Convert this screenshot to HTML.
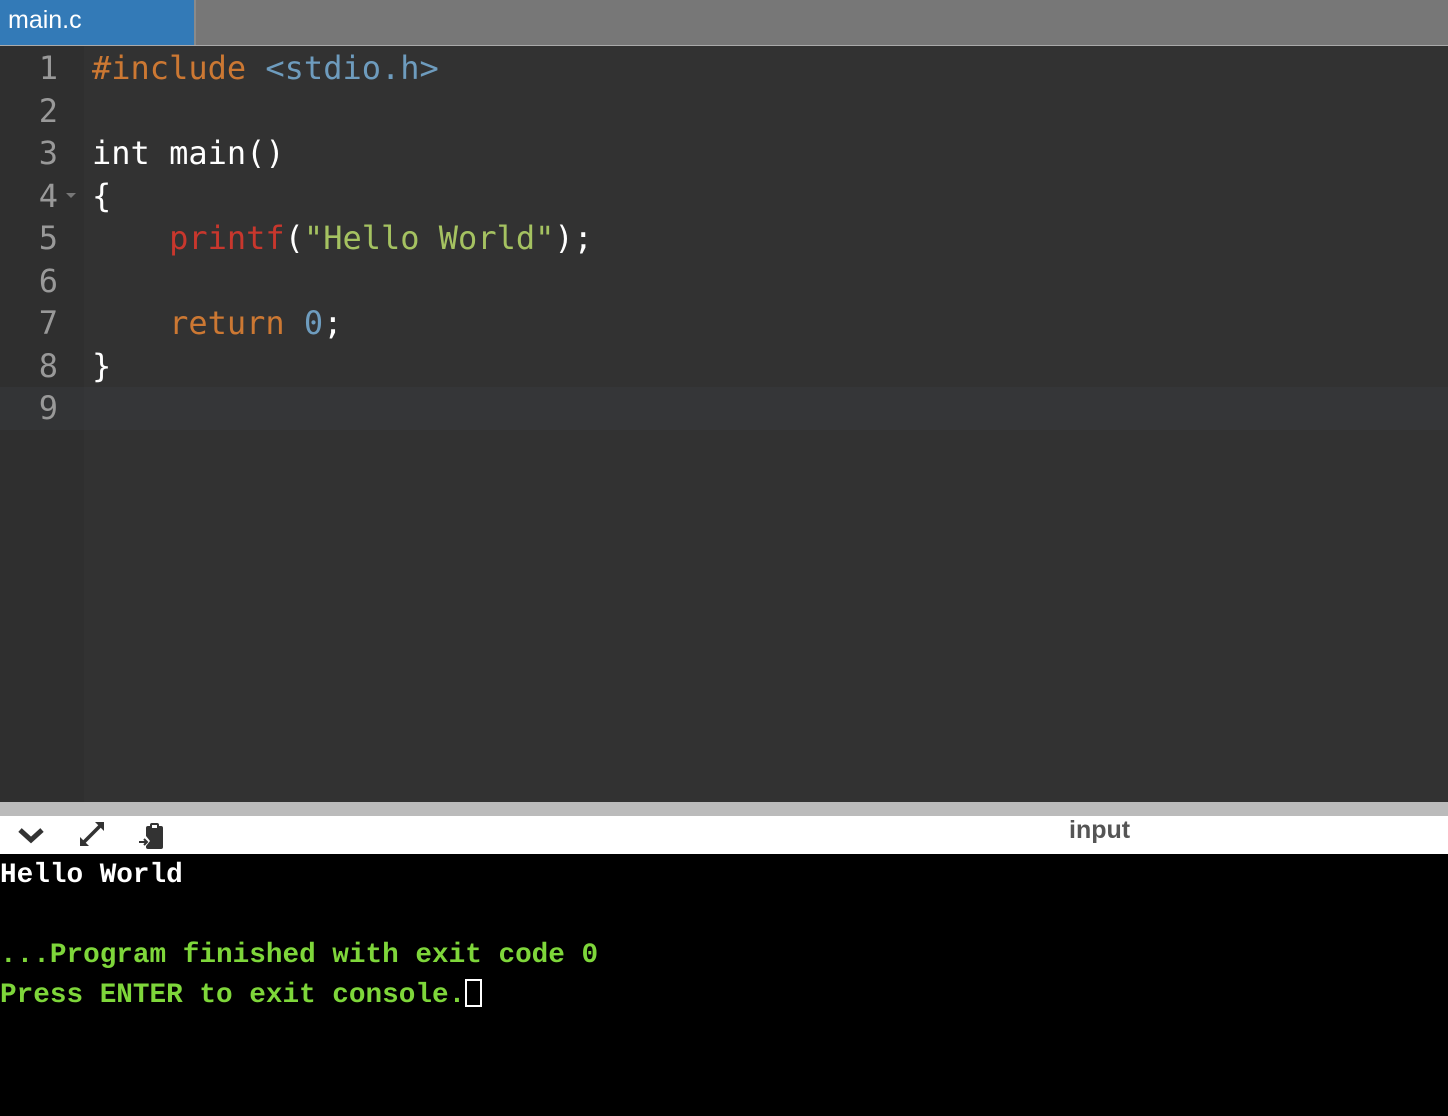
<!DOCTYPE html>
<html><head><meta charset="utf-8"><style>
*{margin:0;padding:0;box-sizing:border-box}
body{width:1448px;height:1116px;overflow:hidden;background:#000;position:relative;font-family:"Liberation Sans",sans-serif}
#tabs{position:absolute;left:0;top:0;width:1448px;height:45px;background:#777}
#tab{position:absolute;left:0;top:0;width:196px;height:45px;background:#337ab7;color:#fff;font-size:25px;padding:6px 0 0 8px;border-right:2px solid #8a8a8a}
#sep{position:absolute;left:0;top:45px;width:1448px;height:1px;background:#aaa}
#ed{position:absolute;left:0;top:46px;width:1448px;height:756px;background:#323232}
#gut{position:absolute;left:0;top:0;width:84px;height:756px;background:#2f2f2f}
#act{position:absolute;left:0;top:341px;width:1448px;height:43px;background:#353638}
#actg{position:absolute;left:0;top:341px;width:84px;height:43px;background:#333436}
.ln{position:absolute;left:0;width:58px;text-align:right;color:#999;font:32px/42.5px "DejaVu Sans Mono",monospace;margin-top:1px}
.cd{position:absolute;left:92px;color:#fff;font:32px/42.5px "DejaVu Sans Mono",monospace;white-space:pre;margin-top:1px}
.o{color:#cc7833}.b{color:#6e9cbe}.r{color:#c8372d}.g{color:#a5c261}
#bar{position:absolute;left:0;top:802px;width:1448px;height:14px;background:#bbb}
#tool{position:absolute;left:0;top:816px;width:1448px;height:38px;background:#fff}
#inp{position:absolute;left:1069px;top:816px;font-size:25px;font-weight:bold;color:#555}
#con{position:absolute;left:0;top:856px;font:bold 27.7px/40px "Liberation Mono",monospace;color:#fff;white-space:pre}
.gr{color:#7ed63a}
#cur{display:inline-block;width:17px;height:28px;border:2px solid #fff;vertical-align:-5px}
</style></head><body>
<div id="tabs"><div id="tab">main.c</div></div>
<div id="sep"></div>
<div id="ed">
<div id="gut"></div>
<div id="act"></div><div id="actg"></div>
<div class="ln" style="top:0">1</div>
<div class="ln" style="top:42.5px">2</div>
<div class="ln" style="top:85px">3</div>
<div class="ln" style="top:127.5px">4</div>
<div style="position:absolute;left:66px;top:147px;width:0;height:0;border-left:5px solid transparent;border-right:5px solid transparent;border-top:5px solid #777"></div>
<div class="ln" style="top:170px">5</div>
<div class="ln" style="top:212.5px">6</div>
<div class="ln" style="top:255px">7</div>
<div class="ln" style="top:297.5px">8</div>
<div class="ln" style="top:340px">9</div>
<div class="cd" style="top:0"><span class="o">#include</span> <span class="b">&lt;stdio.h&gt;</span></div>
<div class="cd" style="top:85px">int main()</div>
<div class="cd" style="top:127.5px">{</div>
<div class="cd" style="top:170px">    <span class="r">printf</span>(<span class="g">"Hello World"</span>);</div>
<div class="cd" style="top:255px">    <span class="o">return</span> <span class="b">0</span>;</div>
<div class="cd" style="top:297.5px">}</div>
</div>
<div id="bar"></div>
<div id="tool">
<svg style="position:absolute;left:18px;top:10px" width="26" height="18" viewBox="0 0 26 18"><path d="M2 4 L13 14 L24 4" stroke="#333" stroke-width="5" fill="none"/></svg>
<svg style="position:absolute;left:77px;top:3px" width="30" height="30" viewBox="0 0 30 30"><path d="M5 25 L25 5" stroke="#333" stroke-width="3.5"/><path d="M18 3 L27 3 L27 12 Z M3 18 L3 27 L12 27 Z" fill="#333"/></svg>
<svg style="position:absolute;left:137px;top:6px" width="30" height="30" viewBox="0 0 30 30"><rect x="9" y="4" width="17" height="23" rx="2" fill="#333"/><rect x="13" y="1" width="9" height="6" rx="2" fill="#333"/><rect x="15" y="3" width="5" height="3" fill="#fff"/><path d="M9 14 L13 19 L9 24 Z" fill="#fff"/><path d="M2 20 L10 20 M7 17 L10 20 L7 23" stroke="#333" stroke-width="2" fill="none"/></svg>
</div>
<div id="inp">input</div>
<div id="con">Hello World

<span class="gr">...Program finished with exit code 0</span>
<span class="gr">Press ENTER to exit console.</span><span id="cur"></span></div>
</body></html>
